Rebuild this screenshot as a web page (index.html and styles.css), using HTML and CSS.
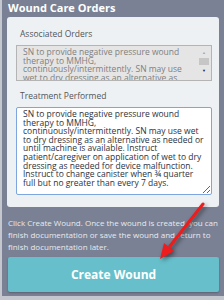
FILE: index.html
```html
<!DOCTYPE html>
<html lang="en">
  <head>
    <meta charset="UTF-8" />
    <meta name="viewport" content="width=device-width, initial-scale=1.0" />
    <title>Wound Care Orders</title>
    <link rel="stylesheet" href="styles.css">
  </head>
  <body>
    <div class="frame">
      <h2 class="title">Wound Care Orders</h2>

      <div class="panel">
        <label class="field-label">Associated Orders</label>
        <div class="orders-box">
          <div class="orders-text">SN to provide negative pressure wound therapy to MMHG, continuously/intermittently. SN may use wet to dry dressing as an alternative as needed or until machine is available.</div>
          <div class="scrollbar">
            <span class="scroll-up">&#9650;</span>
            <span class="scroll-thumb"></span>
            <span class="scroll-down">&#9660;</span>
          </div>
        </div>

        <label class="field-label">Treatment Performed</label>
        <textarea class="treatment">SN to provide negative pressure wound therapy to MMHG, continuously/intermittently. SN may use wet to dry dressing as an alternative as needed or until machine is available. Instruct patient/caregiver on application of wet to dry dressing as needed for device malfunction. Instruct to change canister when &#190; quarter full but no greater than every 7 days.</textarea>
      </div>

      <p class="help">Click Create Wound. Once the wound is created, you can finish documentation or save the wound and return to finish documentation later.</p>

      <button class="create-btn">Create Wound</button>

      <!-- panah merah penunjuk tombol -->
      <svg class="arrow" width="224" height="300" viewBox="0 0 224 300">
        <line x1="203" y1="204" x2="170" y2="246" stroke="#ee1c1c" stroke-width="3" stroke-linecap="round" />
        <polygon points="160,259 174,251 164,243" fill="#ee1c1c" />
      </svg>
    </div>
  </body>
</html>
```

FILE: styles.css
```css
body {
  margin: 0;
  padding: 0;
  font-family: "Open Sans", "Liberation Sans", sans-serif;
  background-color: #c4c7ce;
}

.frame {
  position: relative;
  width: 222px;
  height: 296px;
  border-left: 2px solid #c4c7ce;
  border-bottom: 4px solid #c4c7ce;
  background-color: #7a8194;
  display: flex;
  flex-direction: column;
  overflow: hidden;
}

.title {
  margin: 1px 0 2px 6px;
  font-size: 11px;
  line-height: 14px;
  font-weight: bold;
  color: #fff;
}

.panel {
  margin-left: 5px;
  width: 212px;
  height: 190px;
  box-sizing: border-box;
  padding: 11px 7px 0 9px;
  background-color: #eef1f4;
  border-radius: 3px;
  display: flex;
  flex-direction: column;
}

.field-label {
  padding-left: 4px;
  font-size: 8.5px;
  line-height: 12px;
  color: #555;
}

.orders-box {
  margin: 5px 0 9px;
  height: 36px;
  box-sizing: border-box;
  border: 1px solid #b4b4b4;
  background-color: #e5e5e5;
  display: flex;
  overflow: hidden;
}

.orders-text {
  flex: 1;
  height: 34px;
  overflow: hidden;
  padding: 2px 4px 0 6px;
  font-size: 8.5px;
  line-height: 8.6px;
  color: #808080;
}

.scrollbar {
  width: 14px;
  display: flex;
  flex-direction: column;
  align-items: center;
  padding-top: 4px;
}

.scroll-up {
  font-size: 4px;
  line-height: 6px;
  color: #aaa;
}

.scroll-thumb {
  margin-top: 2px;
  width: 10px;
  height: 7px;
  background-color: #c6c6c6;
}

.scroll-down {
  margin-top: 3px;
  font-size: 4px;
  line-height: 6px;
  color: #222;
}

.treatment {
  margin: 5px 0 0;
  height: 88px;
  box-sizing: border-box;
  padding: 2px 4px 0 6px;
  border: 1px solid #7da6df;
  border-radius: 2px;
  background-color: #fff;
  font-family: "Open Sans", "Liberation Sans", sans-serif;
  font-size: 8.5px;
  line-height: 8.6px;
  color: #2b3340;
  resize: vertical;
  overflow: hidden;
}

.help {
  margin: 10px 4px 4px 6px;
  font-size: 8px;
  line-height: 12px;
  color: #e8eaee;
}

.create-btn {
  margin-left: 6px;
  width: 211px;
  height: 35px;
  border: none;
  border-radius: 2px;
  background-color: #66bfcb;
  color: #fff;
  font-family: "Open Sans", "Liberation Sans", sans-serif;
  font-size: 12px;
  font-weight: bold;
  box-shadow: 0 1px 2px rgba(0, 0, 0, 0.25);
}

.arrow {
  position: absolute;
  left: -2px;
  top: 0;
  pointer-events: none;
  filter: drop-shadow(2px 2px 2px rgba(0, 0, 0, 0.45));
}
```
